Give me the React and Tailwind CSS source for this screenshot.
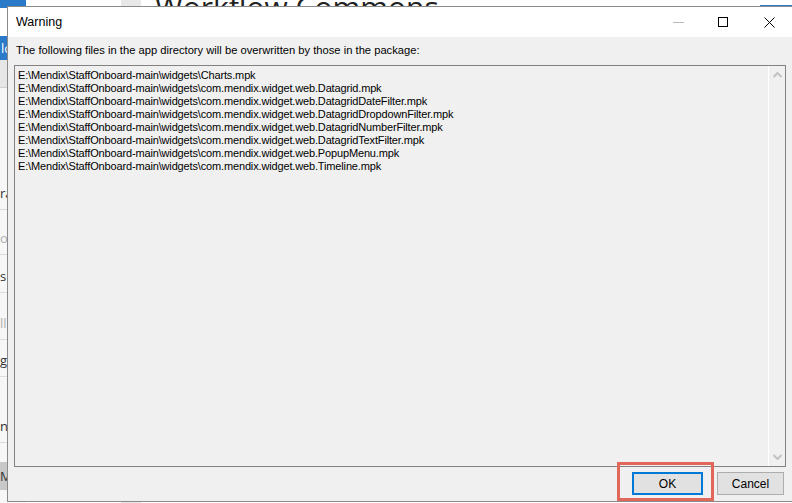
import React from 'react';

const files = [
  'Charts.mpk',
  'com.mendix.widget.web.Datagrid.mpk',
  'com.mendix.widget.web.DatagridDateFilter.mpk',
  'com.mendix.widget.web.DatagridDropdownFilter.mpk',
  'com.mendix.widget.web.DatagridNumberFilter.mpk',
  'com.mendix.widget.web.DatagridTextFilter.mpk',
  'com.mendix.widget.web.PopupMenu.mpk',
  'com.mendix.widget.web.Timeline.mpk',
];

const sideItems = [
  { t: 'ra', h: 'h-[35px]', light: false },
  { t: 'ol', h: 'h-[45px]', light: true },
  { t: 's', h: 'h-[38px]', light: false },
  { t: 'll', h: 'h-[47px]', light: true },
  { t: 'gi', h: 'h-[37px]', light: false },
  { t: 'na', h: 'h-[66px]', light: false },
];

function Backdrop() {
  return (
    <div className="absolute inset-0 flex bg-white">
      <div className="w-[26px] flex flex-col bg-[#f7f7f7] text-[13px] text-[#333] overflow-hidden font-['Open_Sans',sans-serif]">
        <div className="h-[8px] bg-[#2b79c9] shrink-0" />
        <div className="h-[28px] bg-white shrink-0" />
        <div className="h-[24px] bg-[#2b79c9] text-white pl-[1px] leading-[24px] shrink-0">lc</div>
        <div className="h-[28px] bg-[#e6e6e6] border-b border-[#d0d0d0] shrink-0" />
        <div className="h-[87px] shrink-0" />
        {sideItems.map((s, i) => (
          <div key={i} className={`${s.h} shrink-0 border-b border-[#dcdcdc] flex items-end pb-[6px] ${s.light ? 'text-[#b0b0b0]' : ''}`}>{s.t}</div>
        ))}
        <div className="h-[19px] shrink-0" />
        <div className="h-[28px] shrink-0 bg-[#c8c8c8] leading-[28px]">M</div>
      </div>
      <div className="w-[95px] bg-white" />
      <div className="w-[20px] bg-[#e8e8e8]" />
      <div className="flex-1 relative">
        <div className="absolute left-[14px] top-[-16px] text-[30px] text-[#222] font-['Open_Sans',sans-serif]">Workflow Commons</div>
        <div className="absolute right-0 top-[5px] w-[32px] h-[2px] bg-[#2b79c9]" />
      </div>
    </div>
  );
}

function Dialog() {
  return (
    <div className="absolute left-[7px] top-[6px] w-[800px] h-[496px] bg-[#f0f0f0] border border-[#8a8a8a] flex flex-col font-['Liberation_Sans',Arial,sans-serif]">
      <div className="h-[30px] shrink-0 bg-white flex items-center">
        <span className="pl-[8px] text-[12.5px] text-black">Warning</span>
        <div className="ml-auto flex items-center mr-[14px]">
          <div className="w-[44px] flex justify-center"><div className="w-[11px] h-px bg-[#b8b8b8]" /></div>
          <div className="w-[46px] flex justify-center"><div className="w-[10px] h-[10px] border border-black" /></div>
          <div className="w-[46px] flex justify-center">
            <svg width="11" height="11" viewBox="0 0 11 11"><path d="M0.5 0.5L10.5 10.5M10.5 0.5L0.5 10.5" stroke="#000" strokeWidth="1" /></svg>
          </div>
        </div>
      </div>
      <div className="pl-[8px] pt-[5px] h-[28px] shrink-0 text-[11.2px] text-black">The following files in the app directory will be overwritten by those in the package:</div>
      <div className="ml-[6px] w-[772px] h-[402px] shrink-0 border border-[#828282] bg-[#f0f0f0] flex">
        <div className="flex-1 pl-[3px] pt-[3px] text-[11px] leading-[13px] text-black tracking-[-0.15px]">
          {files.map((f) => (
            <div key={f}>E:\Mendix\StaffOnboard-main\widgets\{f}</div>
          ))}
        </div>
        <div className="w-[17px] border-l border-white flex flex-col items-center justify-between py-[6px]">
          <svg width="9" height="6" viewBox="0 0 9 6"><path d="M0.5 5L4.5 1L8.5 5" stroke="#c2c2c2" strokeWidth="2" fill="none" /></svg>
          <svg width="9" height="6" viewBox="0 0 9 6"><path d="M0.5 1L4.5 5L8.5 1" stroke="#c2c2c2" strokeWidth="2" fill="none" /></svg>
        </div>
      </div>
      <div className="flex items-start pl-[609px] mt-[-5px]">
        <div className="border-[3px] border-[#e0675a] pl-[12px] pr-[8px] pt-[7px] pb-[3px]">
          <button className="block w-[71px] h-[23px] bg-[#e1e1e1] border-2 border-[#0078d7] text-[12px] text-black">OK</button>
        </div>
        <button className="ml-[3px] mt-[10px] w-[67px] h-[23px] bg-[#e1e1e1] border border-[#adadad] text-[12px] text-black">Cancel</button>
      </div>
    </div>
  );
}

export default function App() {
  return (
    <div className="relative w-[792px] h-[503px] overflow-hidden">
      <Backdrop />
      <Dialog />
    </div>
  );
}
